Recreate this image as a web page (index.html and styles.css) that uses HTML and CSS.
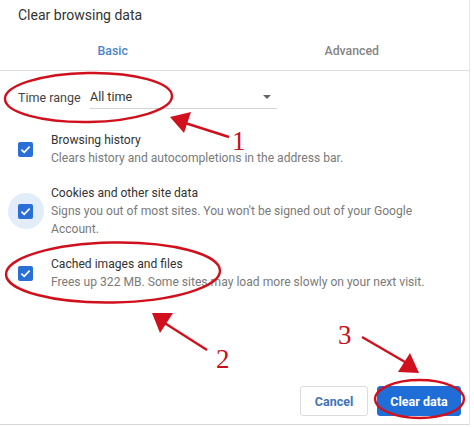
FILE: index.html
```html
<!DOCTYPE html>
<html>
<head>
<meta charset="utf-8">
<link rel="stylesheet" href="styles.css">
</head>
<body>
<div class="dialog">
  <div class="title">Clear browsing data</div>
  <div class="tabs">
    <div class="tab active">Basic</div>
    <div class="tab">Advanced</div>
  </div>
  <div class="time-row">
    <span class="time-label">Time range</span>
    <div class="select"><span>All time</span><span class="caret"></span></div>
  </div>
  <div class="items">
    <div class="item">
      <div class="cb-wrap"><span class="cb"><svg viewBox="0 0 16 16" width="15" height="15"><path d="M3.6 8.2 L6.6 11 L12.4 5" fill="none" stroke="#fff" stroke-width="1.8"/></svg></span></div>
      <div class="texts">
        <div class="it-title">Browsing history</div>
        <div class="it-sub">Clears history and autocompletions in the address bar.</div>
      </div>
    </div>
    <div class="item">
      <div class="cb-wrap halo"><span class="cb"><svg viewBox="0 0 16 16" width="15" height="15"><path d="M3.6 8.2 L6.6 11 L12.4 5" fill="none" stroke="#fff" stroke-width="1.8"/></svg></span></div>
      <div class="texts">
        <div class="it-title">Cookies and other site data</div>
        <div class="it-sub">Signs you out of most sites. You won't be signed out of your Google Account.</div>
      </div>
    </div>
    <div class="item">
      <div class="cb-wrap"><span class="cb"><svg viewBox="0 0 16 16" width="15" height="15"><path d="M3.6 8.2 L6.6 11 L12.4 5" fill="none" stroke="#fff" stroke-width="1.8"/></svg></span></div>
      <div class="texts">
        <div class="it-title">Cached images and files</div>
        <div class="it-sub">Frees up 322 MB. Some sites may load more slowly on your next visit.</div>
      </div>
    </div>
  </div>
  <div class="footer">
    <button class="btn cancel">Cancel</button>
    <button class="btn primary">Clear data</button>
  </div>
</div>
<svg class="notes" width="474" height="427" viewBox="0 0 474 427">
  <g fill="none" stroke="#d0101c" stroke-width="2.4">
    <ellipse cx="88.5" cy="97.5" rx="83.5" ry="24.5" transform="rotate(-1 88.5 97.5)"/>
    <ellipse cx="113" cy="272.5" rx="107" ry="30" transform="rotate(-1 113 272.5)"/>
    <ellipse cx="419.5" cy="399" rx="44.5" ry="19"/>
    <line x1="229" y1="137" x2="182" y2="122"/>
    <line x1="207" y1="350" x2="163" y2="322"/>
    <line x1="362" y1="337" x2="405" y2="362"/>
  </g>
  <g fill="#d0101c">
    <polygon points="170,117 191,112 184,133"/>
    <polygon points="152,313 173,313 160,333"/>
    <polygon points="419,373 410,353 398,372"/>
  </g>
  <g class="num" fill="#c8101c">
    <text x="232" y="150">1</text>
    <text x="216" y="368">2</text>
    <text x="338" y="344">3</text>
  </g>
</svg>
</body>
</html>
```
FILE: styles.css
```css
html, body {
  margin: 0;
  padding: 0;
  background: #fff;
}
body {
  width: 474px;
  height: 427px;
  position: relative;
  overflow: hidden;
  font-family: Roboto, "Liberation Sans", Arial, sans-serif;
}
.dialog {
  width: 470px;
  height: 425px;
  box-sizing: border-box;
  border-right: 1px solid #e6e6e6;
  border-bottom: 1px solid #d8d8d8;
  display: flex;
  flex-direction: column;
  background: #fff;
}
.title {
  padding: 5px 18px 0;
  height: 27px;
  font-size: 14px;
  line-height: 20px;
  color: #333;
}
.tabs {
  display: grid;
  grid-template-columns: 1fr 1fr;
  height: 38px;
  border-bottom: 1px solid #e0e0e0;
}
.tab {
  display: flex;
  align-items: center;
  justify-content: center;
  font-size: 12.3px;
  font-weight: 500;
  color: #858585;
}
.tab.active {
  color: #4a86c8;
  padding-right: 9px;
}
.time-row {
  display: flex;
  align-items: center;
  margin-top: 14px;
  height: 24px;
  padding-left: 18px;
  font-size: 12.5px;
  color: #444;
}
.time-label {
  width: 72px;
}
.select {
  width: 187px;
  height: 24px;
  box-sizing: border-box;
  border-bottom: 1px solid #d4d4d4;
  display: flex;
  align-items: center;
  justify-content: space-between;
  color: #333;
}
.caret {
  width: 0;
  height: 0;
  border-left: 4.5px solid transparent;
  border-right: 4.5px solid transparent;
  border-top: 4.5px solid #666;
  margin-right: 6px;
}
.items {
  display: flex;
  flex-direction: column;
  gap: 17px;
  margin-top: 22px;
}
.item {
  display: flex;
  align-items: center;
  padding-left: 18px;
}
.cb-wrap {
  width: 15px;
  height: 15px;
  display: flex;
  align-items: center;
  justify-content: center;
  position: relative;
  margin-right: 18px;
  flex: none;
}
.cb-wrap.halo::before {
  content: "";
  position: absolute;
  width: 36px;
  height: 36px;
  border-radius: 50%;
  background: #e3ecf9;
  left: -10.5px;
  top: -10.5px;
}
.cb {
  position: relative;
  width: 15px;
  height: 15px;
  border-radius: 2px;
  background: #2a6fd6;
  display: block;
}
.cb svg {
  display: block;
}
.texts {
  font-size: 12.1px;
  line-height: 18px;
}
.it-title {
  color: #333;
}
.it-sub {
  color: #7a7a7a;
  width: 390px;
}
.footer {
  margin-top: auto;
  display: flex;
  justify-content: flex-end;
  gap: 9px;
  padding: 0 8px 8px 0;
}
.btn {
  height: 30px;
  box-sizing: border-box;
  border-radius: 3px;
  font-family: Roboto, "Liberation Sans", Arial, sans-serif;
  font-size: 12.5px;
  font-weight: 700;
  padding: 0;
}
.cancel {
  width: 68px;
  background: #fff;
  border: 1px solid #dadce0;
  color: #3f74b8;
}
.primary {
  width: 84px;
  background: #1f6ed8;
  border: 1px solid #1f6ed8;
  color: #fff;
}
.notes {
  position: absolute;
  left: 0;
  top: 0;
  pointer-events: none;
}
.num text {
  font-family: "Liberation Serif", "DejaVu Serif", serif;
  font-size: 27px;
}
```
